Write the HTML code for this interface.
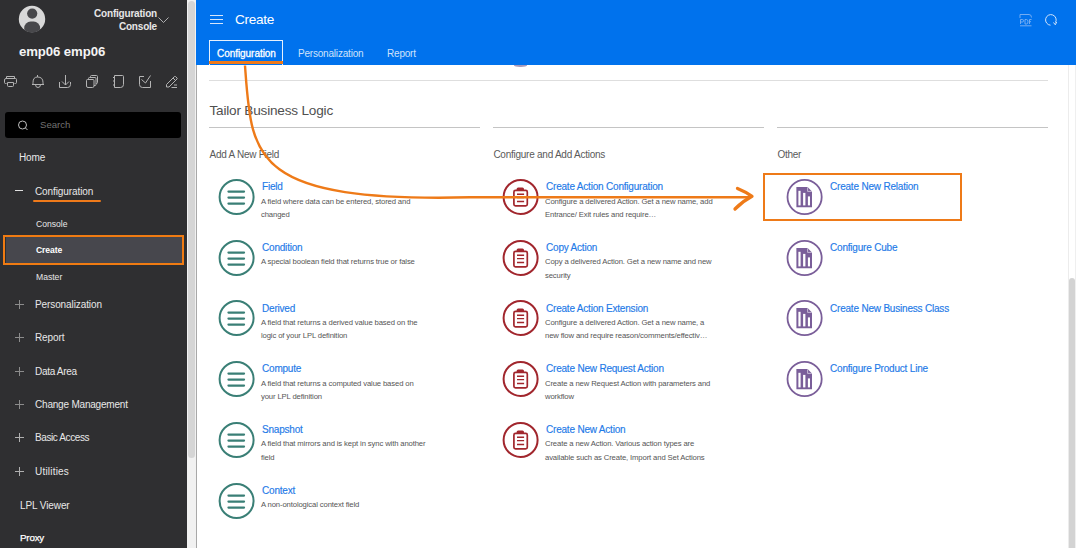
<!DOCTYPE html>
<html><head><meta charset="utf-8">
<style>
*{margin:0;padding:0;box-sizing:border-box}
html,body{width:1076px;height:548px;overflow:hidden;background:#fff;font-family:"Liberation Sans",sans-serif}
.a{position:absolute;white-space:nowrap;line-height:1}
#side{position:absolute;left:0;top:0;width:186.5px;height:548px;background:#2f2f31}
#strack{position:absolute;left:186.5px;top:0;width:10.5px;height:548px;background:#f1f1f1;border-right:1px solid #a8a8a8}
#sthumb{position:absolute;left:187.5px;top:1px;width:7.5px;height:457px;background:#d5d5d5;border-radius:4px}
#hdr{position:absolute;left:196px;top:0;width:880px;height:65px;background:#0072ed}
.nav{color:#e8e8e8;font-size:10px;letter-spacing:-0.1px}
.plus{position:absolute;width:9px;height:9px}
.plus:before{content:"";position:absolute;left:0;top:4px;width:9px;height:1px;background:#b0b0b0}
.plus:after{content:"";position:absolute;left:4px;top:0;width:1px;height:9px;background:#b0b0b0}
.dim:before,.dim:after{background:#8c8c8c!important}
.hl{position:absolute;height:1px;background:#c4c4c4}
.ct{color:#5a5a5a;font-size:10px;letter-spacing:-0.25px}
.ttl{color:#1e7ae8;font-size:10px;letter-spacing:-0.2px;-webkit-text-stroke:0.15px #1e7ae8}
.dsc{color:#555555;font-size:7.7px;letter-spacing:-0.13px}
.ic{position:absolute;width:36px;height:36px;overflow:visible}
</style></head><body>
<div id="side">
  <!-- avatar -->
  <svg class="a" style="left:18px;top:5px" width="28" height="28" viewBox="0 0 28 28">
    <defs><clipPath id="cc"><circle cx="14" cy="14" r="13.3"/></clipPath></defs>
    <circle cx="14" cy="14" r="13.2" fill="#d8d8d8"/>
    <g clip-path="url(#cc)" fill="#48484b">
      <circle cx="14.2" cy="8.6" r="5.1"/>
      <rect x="6.2" y="16.6" width="15.9" height="13.5" rx="6.5"/>
    </g>
  </svg>
  <div class="a" style="left:92px;top:8px;color:#e6e6e6;font-size:10px;font-weight:bold;letter-spacing:-0.2px;text-align:right;width:65px;line-height:12.5px;white-space:normal">Configuration Console</div>
  <svg class="a" style="left:157.5px;top:16px" width="12" height="9" viewBox="0 0 12 9"><path d="M0.5 1.5 L5.5 6.5 L10.5 1.5" fill="none" stroke="#bdbdbd" stroke-width="0.9"/></svg>
  <div class="a" style="left:19px;top:45px;color:#f4f4f4;font-size:13.2px;font-weight:bold;letter-spacing:-0.1px">emp06 emp06</div>
  <!-- icons row -->
  <svg class="a" style="left:0px;top:72px" width="186" height="20" viewBox="0 0 186 20" fill="none" stroke="#b4b4b4" stroke-width="1">
    <!-- printer -->
    <path d="M6.5 6.5 V4.5 H14.5 V6.5"/>
    <path d="M6.5 11.5 H5.5 Q4.5 11.5 4.5 10.5 V8 Q4.5 6.5 6 6.5 H15.5 Q16.5 6.5 16.5 7.5 V10.5 Q16.5 11.5 15.5 11.5 H14.5"/>
    <path d="M7.5 10.5 H13.5 V13.5 Q13.5 14.5 12.5 14.5 H8.5 Q7.5 14.5 7.5 13.5 Z"/>
    <!-- bell -->
    <path d="M37.5 3 V5"/>
    <path d="M33 12.5 V10.5 Q33 5 37.5 5 Q43 5 43 10.5 V12.5"/>
    <path d="M32 12.5 H44"/>
    <path d="M35.5 12.5 Q35.5 15.5 38 15.5 Q40.5 15.5 40.5 12.5"/>
    <!-- download -->
    <path d="M65.5 3 V13"/>
    <path d="M62 9.5 L65.5 13 L69 9.5"/>
    <path d="M59.5 10 V15.5 H67.5 Q70.5 15.5 70.5 12.5 V10"/>
    <!-- copy -->
    <path d="M86.5 8.5 Q86.5 7.5 87.5 7.5 H93 Q94 7.5 94 8.5 V14 Q94 15.5 92.5 15.5 H88 Q86.5 15.5 86.5 14 Z"/>
    <path d="M88.5 7.5 V6.5 Q88.5 5.5 89.5 5.5 H95 Q96 5.5 96 6.5 V12.5 Q96 13.5 95 13.5 H94"/>
    <path d="M90.5 5.5 V4.5 Q90.5 3.5 91.5 3.5 H96.5 Q97.5 3.5 97.5 4.5 V10.5 Q97.5 11.5 96.5 11.5 H96"/>
    <!-- notebook -->
    <path d="M114.5 3.5 H122.5 Q123.5 3.5 123.5 4.5 V12.5 Q123.5 15.5 120.5 15.5 H114.5 Z"/>
    <path d="M113 5.5 H114 M113 9 H114 M113 13 H114" stroke-width="1.2"/>
    <!-- check -->
    <path d="M139.5 4.5 V12.5 Q139.5 15.5 142.5 15.5 H150.5 V9"/>
    <path d="M139.5 4.5 H144"/>
    <path d="M141.5 7.5 L145.5 11 L150.5 3.5"/>
    <!-- pencil -->
    <path d="M166.5 12.5 L174.5 4.5 Q175 4 175.5 4.5 L177 6 Q177.5 6.5 177 7 L169 15 H166.5 Z"/>
    <path d="M173 6 L175.5 8.5"/>
    <path d="M171.5 15.5 H177 M174 13 H177"/>
  </svg>
  <!-- search -->
  <div class="a" style="left:5px;top:111.5px;width:176px;height:26px;background:#000;border-radius:3px"></div>
  <svg class="a" style="left:16.5px;top:119.5px" width="13" height="11" viewBox="0 0 13 11"><circle cx="5.5" cy="5" r="4" fill="none" stroke="#bdbdbd" stroke-width="1"/><path d="M8.3 7.8 L10.5 10" stroke="#bdbdbd" stroke-width="1"/></svg>
  <div class="a" style="left:40px;top:120px;color:#727272;font-size:9.6px;letter-spacing:0">Search</div>
  <!-- nav -->
  <div class="a nav" style="left:19px;top:153px">Home</div>
  <div class="a" style="left:15px;top:190px;width:8px;height:1px;background:#e0e0e0"></div>
  <div class="a nav" style="left:35px;top:187px">Configuration</div>
  <div class="a" style="left:33px;top:199.5px;width:68px;height:2px;background:#ef7a1a;border-radius:1px"></div>
  <div class="a nav" style="left:36px;top:219.5px;font-size:8.6px;letter-spacing:0">Console</div>
  <div class="a" style="left:3px;top:234.5px;width:181px;height:30px;background:#47474d;border:2px solid #f07b12;box-shadow:inset 1px 0 0 #2e2e31"></div>
  <div class="a nav" style="left:36px;top:245.5px;font-size:8.6px;font-weight:bold;letter-spacing:-0.1px;color:#fff">Create</div>
  <div class="a nav" style="left:36px;top:272.5px;font-size:8.6px;letter-spacing:0">Master</div>
  <div class="plus dim" style="left:14.5px;top:299.5px"></div>
  <div class="a nav" style="left:35px;top:300px">Personalization</div>
  <div class="plus dim" style="left:14.5px;top:333px"></div>
  <div class="a nav" style="left:35px;top:333px">Report</div>
  <div class="plus dim" style="left:14.5px;top:366.5px"></div>
  <div class="a nav" style="left:35px;top:367px;letter-spacing:-0.3px">Data Area</div>
  <div class="plus dim" style="left:14.5px;top:400px"></div>
  <div class="a nav" style="left:35px;top:400px;letter-spacing:-0.2px">Change Management</div>
  <div class="plus" style="left:14.5px;top:433px"></div>
  <div class="a nav" style="left:35px;top:433px;letter-spacing:-0.4px">Basic Access</div>
  <div class="plus" style="left:14.5px;top:466.5px"></div>
  <div class="a nav" style="left:35px;top:467px;letter-spacing:0.2px">Utilities</div>
  <div class="a nav" style="left:20px;top:501px">LPL Viewer</div>
  <div class="a nav" style="left:20px;top:533px;font-size:9.8px;color:#fff;-webkit-text-stroke:0.25px #fff;letter-spacing:-0.2px">Proxy</div>
</div>
<div id="strack"></div>
<div id="sthumb"></div>

<!-- header -->
<div id="hdr">
  <div class="a" style="left:14px;top:15px;width:13px;height:1px;background:#d6e6fb"></div>
  <div class="a" style="left:14px;top:19px;width:13px;height:1px;background:#d6e6fb"></div>
  <div class="a" style="left:14px;top:23px;width:13px;height:1px;background:#d6e6fb"></div>
  <div class="a" style="left:39px;top:13px;color:#fff;font-size:13.6px;letter-spacing:-0.3px">Create</div>
  <div class="a" style="left:13px;top:40px;width:74px;height:25px;border:1px solid #e6f0fd;border-bottom:none"></div>
  <div class="a" style="left:21px;top:49px;color:#fff;font-size:10px;-webkit-text-stroke:0.3px #fff;letter-spacing:-0.05px">Configuration</div>
  <div class="a" style="left:13px;top:61.3px;width:74px;height:2.4px;background:#ef7a1a"></div>
  <div class="a" style="left:102px;top:49px;color:#cfe2fb;font-size:10px;letter-spacing:-0.2px">Personalization</div>
  <div class="a" style="left:191px;top:49px;color:#cfe2fb;font-size:10px;letter-spacing:-0.2px">Report</div>
  <!-- pdf -->
  <svg class="a" style="left:823px;top:13px" width="14" height="14" viewBox="0 0 14 14" fill="none" stroke="#7fb2f3" stroke-width="0.9">
    <path d="M1 5 V1.5 H10 Q12.5 1.5 12.5 4.5"/>
    <path d="M1.5 11 V6.5 H3.5 Q4.5 6.5 4.5 7.8 Q4.5 9 3.5 9 H1.5 M6 6.5 V11 H7.5 Q9 11 9 8.75 Q9 6.5 7.5 6.5 Z M10.5 11 V6.5 H12.5 M10.5 8.7 H12"/>
    <path d="M1 12.8 H12.5"/>
  </svg>
  <!-- refresh -->
  <svg class="a" style="left:848px;top:13px" width="14" height="14" viewBox="0 0 14 14" fill="none" stroke="#d2e4fb" stroke-width="1">
    <path d="M6.5 12.2 A5.3 5.3 0 1 1 11.5 9.5"/>
    <path d="M9.5 9.5 L11.3 11.8 L12.7 9"/>
  </svg>
</div>

<!-- content -->
<div class="a" style="left:514px;top:65px;width:12.5px;height:1.6px;border-radius:0 0 6px 6px/0 0 1.6px 1.6px;background:#8877a3;opacity:.75"></div>
<div class="hl" style="left:209px;top:80px;width:839px;background:#dedede"></div>
<div class="a" style="left:209.5px;top:104px;color:#505050;font-size:13.6px;letter-spacing:-0.2px">Tailor Business Logic</div>
<div class="hl" style="left:209px;top:127px;width:271px"></div>
<div class="hl" style="left:493px;top:127px;width:271px"></div>
<div class="hl" style="left:777px;top:127px;width:271px"></div>
<div class="a ct" style="left:209.5px;top:149.5px">Add A New Field</div>
<div class="a ct" style="left:493.4px;top:149.5px">Configure and Add Actions</div>
<div class="a ct" style="left:777.4px;top:149.5px">Other</div>

<!--ITEMS-->
<svg class="ic" style="left:218.0px;top:179.0px" width="36" height="36" viewBox="0 0 36 36"><circle cx="18.6" cy="18" r="17" fill="none" stroke="#3a7f76" stroke-width="2"/><path d="M10.4 12.6 H26.1 M10.4 18.6 H26.1 M10.4 24.6 H26.1" stroke="#3a7f76" stroke-width="2.1" stroke-linecap="round"/></svg>
<div class="a ttl" style="left:262px;top:182px">Field</div>
<div class="a dsc" style="left:261px;top:198px">A field where data can be entered, stored and</div>
<div class="a dsc" style="left:261px;top:211px">changed</div>
<svg class="ic" style="left:218.0px;top:239.7px" width="36" height="36" viewBox="0 0 36 36"><circle cx="18.6" cy="18" r="17" fill="none" stroke="#3a7f76" stroke-width="2"/><path d="M10.4 12.6 H26.1 M10.4 18.6 H26.1 M10.4 24.6 H26.1" stroke="#3a7f76" stroke-width="2.1" stroke-linecap="round"/></svg>
<div class="a ttl" style="left:262px;top:243px">Condition</div>
<div class="a dsc" style="left:261px;top:258px">A special boolean field that returns true or false</div>
<svg class="ic" style="left:218.0px;top:300.4px" width="36" height="36" viewBox="0 0 36 36"><circle cx="18.6" cy="18" r="17" fill="none" stroke="#3a7f76" stroke-width="2"/><path d="M10.4 12.6 H26.1 M10.4 18.6 H26.1 M10.4 24.6 H26.1" stroke="#3a7f76" stroke-width="2.1" stroke-linecap="round"/></svg>
<div class="a ttl" style="left:262px;top:304px">Derived</div>
<div class="a dsc" style="left:261px;top:319px">A field that returns a derived value based on the</div>
<div class="a dsc" style="left:261px;top:332px">logic of your LPL definition</div>
<svg class="ic" style="left:218.0px;top:361.1px" width="36" height="36" viewBox="0 0 36 36"><circle cx="18.6" cy="18" r="17" fill="none" stroke="#3a7f76" stroke-width="2"/><path d="M10.4 12.6 H26.1 M10.4 18.6 H26.1 M10.4 24.6 H26.1" stroke="#3a7f76" stroke-width="2.1" stroke-linecap="round"/></svg>
<div class="a ttl" style="left:262px;top:364px">Compute</div>
<div class="a dsc" style="left:261px;top:380px">A field that returns a computed value based on</div>
<div class="a dsc" style="left:261px;top:393px">your LPL definition</div>
<svg class="ic" style="left:218.0px;top:421.8px" width="36" height="36" viewBox="0 0 36 36"><circle cx="18.6" cy="18" r="17" fill="none" stroke="#3a7f76" stroke-width="2"/><path d="M10.4 12.6 H26.1 M10.4 18.6 H26.1 M10.4 24.6 H26.1" stroke="#3a7f76" stroke-width="2.1" stroke-linecap="round"/></svg>
<div class="a ttl" style="left:262px;top:425px">Snapshot</div>
<div class="a dsc" style="left:261px;top:440px">A field that mirrors and is kept in sync with another</div>
<div class="a dsc" style="left:261px;top:454px">field</div>
<svg class="ic" style="left:218.0px;top:482.5px" width="36" height="36" viewBox="0 0 36 36"><circle cx="18.6" cy="18" r="17" fill="none" stroke="#3a7f76" stroke-width="2"/><path d="M10.4 12.6 H26.1 M10.4 18.6 H26.1 M10.4 24.6 H26.1" stroke="#3a7f76" stroke-width="2.1" stroke-linecap="round"/></svg>
<div class="a ttl" style="left:262px;top:486px">Context</div>
<div class="a dsc" style="left:261px;top:501px">A non-ontological context field</div>
<svg class="ic" style="left:502.0px;top:179.0px" width="36" height="36" viewBox="0 0 36 36"><circle cx="18.6" cy="18" r="17" fill="none" stroke="#a1262d" stroke-width="2"/><rect x="11.9" y="11.4" width="13.4" height="15.4" rx="1.6" fill="none" stroke="#a1262d" stroke-width="1.7"/><path d="M14.6 12 V10 Q14.6 8.5 16.1 8.5 H20.5 Q22 8.5 22 10 V12 Z" fill="#a1262d"/><path d="M15 15.3 H22.1 M15 18.6 H22.1 M15 22.4 H22.1" stroke="#a1262d" stroke-width="1.45"/></svg>
<div class="a ttl" style="left:546px;top:182px">Create Action Configuration</div>
<div class="a dsc" style="left:545px;top:198px">Configure a delivered Action. Get a new name, add</div>
<div class="a dsc" style="left:545px;top:211px">Entrance/ Exit rules and require…</div>
<svg class="ic" style="left:502.0px;top:239.7px" width="36" height="36" viewBox="0 0 36 36"><circle cx="18.6" cy="18" r="17" fill="none" stroke="#a1262d" stroke-width="2"/><rect x="11.9" y="11.4" width="13.4" height="15.4" rx="1.6" fill="none" stroke="#a1262d" stroke-width="1.7"/><path d="M14.6 12 V10 Q14.6 8.5 16.1 8.5 H20.5 Q22 8.5 22 10 V12 Z" fill="#a1262d"/><path d="M15 15.3 H22.1 M15 18.6 H22.1 M15 22.4 H22.1" stroke="#a1262d" stroke-width="1.45"/></svg>
<div class="a ttl" style="left:546px;top:243px">Copy Action</div>
<div class="a dsc" style="left:545px;top:258px">Copy a delivered Action. Get a new name and new</div>
<div class="a dsc" style="left:545px;top:272px">security</div>
<svg class="ic" style="left:502.0px;top:300.4px" width="36" height="36" viewBox="0 0 36 36"><circle cx="18.6" cy="18" r="17" fill="none" stroke="#a1262d" stroke-width="2"/><rect x="11.9" y="11.4" width="13.4" height="15.4" rx="1.6" fill="none" stroke="#a1262d" stroke-width="1.7"/><path d="M14.6 12 V10 Q14.6 8.5 16.1 8.5 H20.5 Q22 8.5 22 10 V12 Z" fill="#a1262d"/><path d="M15 15.3 H22.1 M15 18.6 H22.1 M15 22.4 H22.1" stroke="#a1262d" stroke-width="1.45"/></svg>
<div class="a ttl" style="left:546px;top:304px">Create Action Extension</div>
<div class="a dsc" style="left:545px;top:319px">Configure a delivered Action. Get a new name, a</div>
<div class="a dsc" style="left:545px;top:332px">new flow and require reason/comments/effectiv…</div>
<svg class="ic" style="left:502.0px;top:361.1px" width="36" height="36" viewBox="0 0 36 36"><circle cx="18.6" cy="18" r="17" fill="none" stroke="#a1262d" stroke-width="2"/><rect x="11.9" y="11.4" width="13.4" height="15.4" rx="1.6" fill="none" stroke="#a1262d" stroke-width="1.7"/><path d="M14.6 12 V10 Q14.6 8.5 16.1 8.5 H20.5 Q22 8.5 22 10 V12 Z" fill="#a1262d"/><path d="M15 15.3 H22.1 M15 18.6 H22.1 M15 22.4 H22.1" stroke="#a1262d" stroke-width="1.45"/></svg>
<div class="a ttl" style="left:546px;top:364px">Create New Request Action</div>
<div class="a dsc" style="left:545px;top:380px">Create a new Request Action with parameters and</div>
<div class="a dsc" style="left:545px;top:393px">workflow</div>
<svg class="ic" style="left:502.0px;top:421.8px" width="36" height="36" viewBox="0 0 36 36"><circle cx="18.6" cy="18" r="17" fill="none" stroke="#a1262d" stroke-width="2"/><rect x="11.9" y="11.4" width="13.4" height="15.4" rx="1.6" fill="none" stroke="#a1262d" stroke-width="1.7"/><path d="M14.6 12 V10 Q14.6 8.5 16.1 8.5 H20.5 Q22 8.5 22 10 V12 Z" fill="#a1262d"/><path d="M15 15.3 H22.1 M15 18.6 H22.1 M15 22.4 H22.1" stroke="#a1262d" stroke-width="1.45"/></svg>
<div class="a ttl" style="left:546px;top:425px">Create New Action</div>
<div class="a dsc" style="left:545px;top:440px">Create a new Action. Various action types are</div>
<div class="a dsc" style="left:545px;top:454px">available such as Create, Import and Set Actions</div>
<svg class="ic" style="left:786.0px;top:179.0px" width="36" height="36" viewBox="0 0 36 36"><circle cx="18.6" cy="18" r="17.1" fill="none" stroke="#7a5e99" stroke-width="1.8"/><path d="M10.4 8 H21.6 L26 12.4 V28.2 H10.4 Z" fill="#7a5e99"/><path d="M21.6 8.3 V12.4 H25.7" fill="none" stroke="#fff" stroke-width="0.7" opacity=".8"/><rect x="12.4" y="11.8" width="2.2" height="14.6" fill="#fff"/><rect x="17.1" y="13.9" width="2.3" height="12.5" fill="#fff"/><rect x="21.9" y="17.4" width="2.1" height="9" fill="#fff"/></svg>
<div class="a ttl" style="left:830px;top:182px">Create New Relation</div>
<svg class="ic" style="left:786.0px;top:239.7px" width="36" height="36" viewBox="0 0 36 36"><circle cx="18.6" cy="18" r="17.1" fill="none" stroke="#7a5e99" stroke-width="1.8"/><path d="M10.4 8 H21.6 L26 12.4 V28.2 H10.4 Z" fill="#7a5e99"/><path d="M21.6 8.3 V12.4 H25.7" fill="none" stroke="#fff" stroke-width="0.7" opacity=".8"/><rect x="12.4" y="11.8" width="2.2" height="14.6" fill="#fff"/><rect x="17.1" y="13.9" width="2.3" height="12.5" fill="#fff"/><rect x="21.9" y="17.4" width="2.1" height="9" fill="#fff"/></svg>
<div class="a ttl" style="left:830px;top:243px">Configure Cube</div>
<svg class="ic" style="left:786.0px;top:300.4px" width="36" height="36" viewBox="0 0 36 36"><circle cx="18.6" cy="18" r="17.1" fill="none" stroke="#7a5e99" stroke-width="1.8"/><path d="M10.4 8 H21.6 L26 12.4 V28.2 H10.4 Z" fill="#7a5e99"/><path d="M21.6 8.3 V12.4 H25.7" fill="none" stroke="#fff" stroke-width="0.7" opacity=".8"/><rect x="12.4" y="11.8" width="2.2" height="14.6" fill="#fff"/><rect x="17.1" y="13.9" width="2.3" height="12.5" fill="#fff"/><rect x="21.9" y="17.4" width="2.1" height="9" fill="#fff"/></svg>
<div class="a ttl" style="left:830px;top:304px">Create New Business Class</div>
<svg class="ic" style="left:786.0px;top:361.1px" width="36" height="36" viewBox="0 0 36 36"><circle cx="18.6" cy="18" r="17.1" fill="none" stroke="#7a5e99" stroke-width="1.8"/><path d="M10.4 8 H21.6 L26 12.4 V28.2 H10.4 Z" fill="#7a5e99"/><path d="M21.6 8.3 V12.4 H25.7" fill="none" stroke="#fff" stroke-width="0.7" opacity=".8"/><rect x="12.4" y="11.8" width="2.2" height="14.6" fill="#fff"/><rect x="17.1" y="13.9" width="2.3" height="12.5" fill="#fff"/><rect x="21.9" y="17.4" width="2.1" height="9" fill="#fff"/></svg>
<div class="a ttl" style="left:830px;top:364px">Configure Product Line</div>
<!--/ITEMS-->

<!-- right scrollbar -->
<div class="a" style="left:1068px;top:65px;width:1px;height:483px;background:#ececec"></div>
<div class="a" style="left:1069px;top:278px;width:6px;height:270px;background:#d3d3d3;border-radius:3px 3px 0 0"></div>
<div class="a" style="left:1075px;top:65px;width:1px;height:483px;background:#efefef"></div>

<!-- annotations -->
<svg class="a ann" style="left:0;top:0" width="1076" height="548" viewBox="0 0 1076 548" fill="none" stroke="#ee7a18">
  <path d="M245 65.5 C251.7 157.5 249.7 202.4 470 197.3 L751 197.2" stroke-width="2.4"/>
  <path d="M737.5 188.5 Q746 192 752 196.3 Q743 201 735 209" stroke-width="3.3" stroke-linecap="round" stroke-linejoin="round"/>
  <rect x="764" y="174" width="197" height="46" stroke-width="2"/>
</svg>
</body></html>
